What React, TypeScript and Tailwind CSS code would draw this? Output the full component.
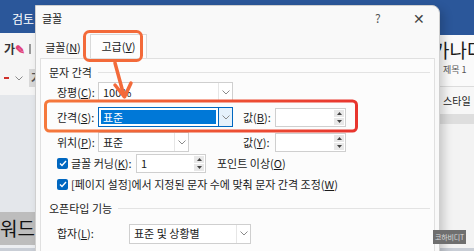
import React from 'react'

function Chevron({ className = '' }: { className?: string }) {
  return (
    <svg width="8" height="5" viewBox="0 0 8 5" className={className}>
      <path d="M0.5 0.5 L4 4 L7.5 0.5" fill="none" stroke="#8a8a8a" strokeWidth="1" />
    </svg>
  )
}

function Combo({ width, value, active = false }: { width: string; value: string; active?: boolean }) {
  return (
    <div className={`flex h-[20px] ${width} border ${active ? 'border-[#0067c0]' : 'border-[#cfcfcf]'} bg-white`}>
      <div className="flex flex-1 items-center p-[2px]">
        {active ? (
          <span className="flex h-full w-full items-center bg-[#0078d7] pl-[2px] text-white">{value}</span>
        ) : (
          <span className="pl-[2px]">{value}</span>
        )}
      </div>
      <div className={`flex w-[14px] items-center justify-center border-l ${active ? 'border-[#0067c0] bg-[#e5f1fb]' : 'border-[#e6e6e6]'}`}>
        <Chevron />
      </div>
    </div>
  )
}

function Spin({ width, value = '' }: { width: string; value?: string }) {
  return (
    <div className={`flex h-[19px] ${width} border border-[#cfcfcf] bg-white`}>
      <div className="flex flex-1 items-center pl-[4px]">{value}</div>
      <div className="flex w-[12px] flex-col gap-[1px] p-[1px]">
        <div className="flex flex-1 items-center justify-center bg-[#e8e8e8]">
          <svg width="5" height="3" viewBox="0 0 5 3"><path d="M0 3 L2.5 0 L5 3Z" fill="#444" /></svg>
        </div>
        <div className="flex flex-1 items-center justify-center bg-[#e8e8e8]">
          <svg width="5" height="3" viewBox="0 0 5 3"><path d="M0 0 L2.5 3 L5 0Z" fill="#444" /></svg>
        </div>
      </div>
    </div>
  )
}

function Check() {
  return (
    <div className="flex h-[11px] w-[11px] items-center justify-center rounded-[2px] bg-[#0067c0]">
      <svg width="8" height="7" viewBox="0 0 8 7"><path d="M1 3.5 L3 5.5 L7 1" fill="none" stroke="white" strokeWidth="1.4" /></svg>
    </div>
  )
}

function Group({ title }: { title: string }) {
  return (
    <div className="flex h-[20px] items-center gap-[6px] pl-[8px] pr-[4px]">
      <span>{title}</span>
      <div className="h-px flex-1 bg-[#e3e3e3]" />
    </div>
  )
}

export default function App() {
  return (
    <div className="relative h-[251px] w-[474px] overflow-hidden bg-[#eef0f3] font-['Noto_Sans_CJK_KR','Noto_Sans',sans-serif] text-[11px] text-[#1b1b1b]">
      {/* Word window behind */}
      <div className="flex h-full">
        <div className="flex w-[440px] shrink-0 flex-col">
          <div className="flex h-[33px] items-end bg-[#2b579a] pb-[5px] pl-[12px] text-[12px] text-white">검토</div>
          <div className="flex h-[62px] flex-col bg-[#f5f5f5] px-[4px] pt-[8px]">
            <div className="flex h-[16px] items-center gap-[4px]">
              <span className="text-[12px] font-bold text-[#333]">가<span className="text-[#e0407a]">✎</span></span>
              <div className="h-[10px] w-[6px] border-l-2 border-[#999]" />
            </div>
            <div className="mt-[14px] flex h-[14px] items-center gap-[6px]">
              <div className="h-[2px] w-[5px] bg-[#d0302b]" />
              <Chevron />
              <span className="bg-[#d8d8d8] px-[2px] text-[12px] font-bold text-[#555]">가</span>
            </div>
          </div>
          <div className="h-[117px] bg-[#e4e7eb]" />
          <div className="flex h-[33px] items-center bg-[#bdbdbd] text-[19px] text-[#111]">
            <span className="whitespace-nowrap">워드</span>
          </div>
          <div className="flex-1 bg-[#eceef1]" />
        </div>
        <div className="flex min-w-0 flex-1 flex-col">
          <div className="h-[35px] bg-[#2b579a]" />
          <div className="flex h-[51px] flex-col bg-[#fafafa] pl-[3px]">
            <span className="-ml-[11px] mt-[2px] whitespace-nowrap text-[19px] leading-[26px]">가나다</span>
            <span className="whitespace-nowrap text-[9px] text-[#555]">제목 1</span>
          </div>
          <div className="h-px bg-[#dcdcdc]" />
          <div className="flex h-[27px] items-center whitespace-nowrap bg-[#f7f7f7] pl-[3px] text-[10px]">스타일</div>
          <div className="h-[10px] bg-[#dedede]" />
          <div className="flex-1 bg-[#f3f3f3]" />
        </div>
      </div>
      <div className="absolute bottom-0 left-0 h-[3px] w-full bg-[#c9ced6]" />

      {/* Font dialog */}
      <div className="absolute left-[35px] top-[5px] flex h-[260px] w-[405px] flex-col rounded-tr-[8px] border border-[#cfcfcf] bg-[#f9f9f9] shadow-[4px_4px_10px_rgba(0,0,0,0.18)]">
        <div className="flex h-[24px] items-center pl-[6px] pr-[14px]">
          <span className="flex-1">글꼴</span>
          <span className="w-[38px] text-[12px] text-[#555]">?</span>
          <span className="text-[14px] text-[#444]">✕</span>
        </div>
        <div className="mt-[4px] flex h-[24px] items-end px-[5px]">
          <div className="flex h-[22px] w-[44px] items-center justify-center">
            글꼴(<u>N</u>)
          </div>
          <div className="ml-[5px] flex h-[24px] w-[57px] items-center justify-center border border-b-0 border-[#dadada] bg-[#fdfdfd]">
            고급(<u>V</u>)
          </div>
        </div>
        <div className="mx-[4px] flex flex-1 flex-col border border-[#e0e0e0] bg-[#fcfcfc] pt-[3px]">
          <Group title="문자 간격" />
          <div className="flex h-[20px] items-center pl-[16px]">
            <span className="w-[41px]">장평(<u>C</u>):</span>
            <Combo width="w-[135px]" value="100%" />
          </div>
          <div className="mt-[5px] flex h-[20px] items-center pl-[16px]">
            <span className="w-[41px]">간격(<u>S</u>):</span>
            <div className="w-[145px]"><Combo width="w-[135px]" value="표준" active /></div>
            <span className="w-[32px]">값(<u>B</u>):</span>
            <Spin width="w-[71px]" />
          </div>
          <div className="mt-[5px] flex h-[20px] items-center pl-[16px]">
            <span className="w-[41px]">위치(<u>P</u>):</span>
            <div className="w-[145px]"><Combo width="w-[91px]" value="표준" /></div>
            <span className="w-[32px]">값(<u>Y</u>):</span>
            <Spin width="w-[71px]" />
          </div>
          <div className="mt-[1px] flex h-[20px] items-center pl-[16px]">
            <Check />
            <span className="ml-[3px] w-[65px]">글꼴 커닝(<u>K</u>):</span>
            <Spin width="w-[70px]" value="1" />
            <span className="ml-[11px]">포인트 이상(<u>O</u>)</span>
          </div>
          <div className="mt-[1px] flex h-[20px] items-center pl-[16px]">
            <Check />
            <span className="ml-[3px]">[페이지 설정]에서 지정된 문자 수에 맞춰 문자 간격 조정(<u>W</u>)</span>
          </div>
          <div className="mt-[4px]">
            <Group title="오픈타입 기능" />
          </div>
          <div className="mt-[5px] flex h-[21px] items-center pl-[16px]">
            <span className="w-[72px]">합자(<u>L</u>):</span>
            <Combo width="w-[122px]" value="표준 및 상황별" />
          </div>
        </div>
      </div>

      {/* watermark */}
      <div className="absolute left-[433px] top-[230px] flex h-[14px] w-[33px] items-center justify-center bg-[#6f6f6f] text-[7px] tracking-tight text-[#dcdcdc]">
        코하비디T
      </div>

      {/* annotations */}
      <svg className="pointer-events-none absolute left-0 top-0" width="474" height="251" viewBox="0 0 474 251">
        <defs>
          <linearGradient id="rg" x1="0" y1="0" x2="1" y2="0">
            <stop offset="0" stopColor="#f5793c" />
            <stop offset="1" stopColor="#e8352e" />
          </linearGradient>
        </defs>
        <rect x="84.5" y="31.5" width="57" height="29" rx="5" fill="none" stroke="#f36a3a" strokeWidth="3" />
        <rect x="45.5" y="101" width="311" height="30" rx="4" fill="none" stroke="url(#rg)" strokeWidth="3" />
        <path d="M115 63 L124 96" stroke="#f36a3a" strokeWidth="3.5" strokeLinecap="round" fill="none" />
        <path d="M115 85 L124.5 97 L131 83" stroke="#f36a3a" strokeWidth="3.5" strokeLinecap="round" strokeLinejoin="round" fill="none" />
      </svg>
    </div>
  )
}
